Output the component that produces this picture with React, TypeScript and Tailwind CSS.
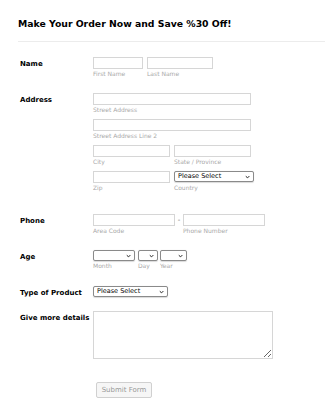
import React from 'react';

const font = { fontFamily: '"DejaVu Sans", Verdana, sans-serif' };

const Chevron = () => (
  <svg
    viewBox="0 0 8 5"
    className="pointer-events-none absolute right-[4px] top-1/2 h-[3px] w-[5px] -translate-y-1/2"
    fill="none"
    stroke="#111"
    strokeWidth="1.6"
  >
    <path d="M1 1l3 3 3-3" />
  </svg>
);

const Select = ({ w, text = '' }: { w: string; text?: string }) => (
  <div className={`relative h-[11px] ${w}`}>
    <select className="block h-full w-full appearance-none rounded-[2px] border border-[#8a8a8a] bg-white pl-[3px] text-[6.5px] leading-[9px] text-black shadow-[0_0.5px_1px_rgba(0,0,0,0.15)] outline-none">
      <option>{text}</option>
    </select>
    <Chevron />
  </div>
);

const Input = ({ w }: { w: string }) => (
  <input className={`block h-[12px] ${w} border border-[#d6d6d6] bg-white outline-none`} />
);

const Sub = ({ children, className = '' }: { children: React.ReactNode; className?: string }) => (
  <div className={`text-[6px] leading-[9px] text-[#a9a9a9] ${className}`}>{children}</div>
);

const Label = ({ children }: { children: React.ReactNode }) => (
  <div className="w-[73px] shrink-0 whitespace-nowrap pt-[1px] text-[7px] font-bold leading-[12px] text-black">
    {children}
  </div>
);

export default function App() {
  return (
    <div className="h-[400px] w-[325px] overflow-hidden bg-white" style={font}>
      <h1 className="pl-[18px] pt-[17px] text-[9.3px] font-bold leading-[13px] text-black">
        Make Your Order Now and Save %30 Off!
      </h1>
      <div className="ml-[18px] mt-[11px] border-t border-[#ececec]" />

      <div className="pl-[20px]">
        {/* Name */}
        <div className="mt-[15px] flex items-start">
          <Label>Name</Label>
          <div className="flex gap-[4px]">
            <div>
              <Input w="w-[50px]" />
              <Sub>First Name</Sub>
            </div>
            <div>
              <Input w="w-[66px]" />
              <Sub>Last Name</Sub>
            </div>
          </div>
        </div>

        {/* Address */}
        <div className="mt-[15px] flex items-start">
          <Label>Address</Label>
          <div className="flex flex-col gap-[5px]">
            <div>
              <Input w="w-[158px]" />
              <Sub>Street Address</Sub>
            </div>
            <div>
              <Input w="w-[158px]" />
              <Sub>Street Address Line 2</Sub>
            </div>
            <div className="flex gap-[4px]">
              <div>
                <Input w="w-[77px]" />
                <Sub>City</Sub>
              </div>
              <div>
                <Input w="w-[77px]" />
                <Sub>State / Province</Sub>
              </div>
            </div>
            <div className="flex gap-[4px]">
              <div>
                <Input w="w-[77px]" />
                <Sub>Zip</Sub>
              </div>
              <div>
                <Select w="w-[80px]" text="Please Select" />
                <Sub className="mt-[1px]">Country</Sub>
              </div>
            </div>
          </div>
        </div>

        {/* Phone */}
        <div className="mt-[22px] flex items-start">
          <Label>Phone</Label>
          <div className="flex items-start">
            <div>
              <Input w="w-[82px]" />
              <Sub>Area Code</Sub>
            </div>
            <div className="w-[8px] text-center text-[7px] leading-[12px] text-[#666]">-</div>
            <div>
              <Input w="w-[82px]" />
              <Sub>Phone Number</Sub>
            </div>
          </div>
        </div>

        {/* Age */}
        <div className="mt-[15px] flex items-start">
          <Label>Age</Label>
          <div className="flex">
            <div>
              <Select w="w-[42px]" />
              <Sub>Month</Sub>
            </div>
            <div className="ml-[3px]">
              <Select w="w-[20px]" />
              <Sub>Day</Sub>
            </div>
            <div className="ml-[2px]">
              <Select w="w-[27px]" />
              <Sub>Year</Sub>
            </div>
          </div>
        </div>

        {/* Type of Product */}
        <div className="mt-[16px] flex items-start">
          <Label>Type of Product</Label>
          <Select w="w-[75px]" text="Please Select" />
        </div>

        {/* Details */}
        <div className="mt-[12px] flex items-start">
          <Label>Give more details</Label>
          <textarea className="block h-[48px] w-[180px] border border-[#d6d6d6] bg-white outline-none" />
        </div>

        <div className="mt-[23px] flex pl-[76px]">
          <button className="h-[16px] w-[56px] rounded-[2px] border border-[#d0d0d0] bg-[#f6f6f6] text-[7px] leading-[14px] text-[#999]">
            Submit Form
          </button>
        </div>
      </div>
    </div>
  );
}
